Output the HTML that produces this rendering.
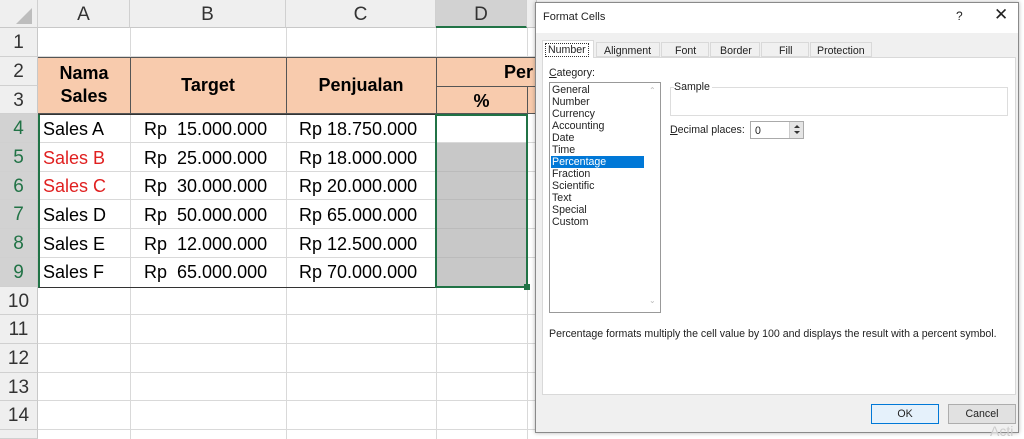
<!DOCTYPE html>
<html><head><meta charset="utf-8"><style>
*{margin:0;padding:0;box-sizing:border-box}
body{width:1024px;height:439px;overflow:hidden;background:#fff;position:relative;font-family:"Liberation Sans",Arial,sans-serif}
.a{position:absolute}
.hl{position:absolute;height:1px;background:#d9d9d9}
.vl{position:absolute;width:1px;background:#d9d9d9}
.ch{position:absolute;top:0;height:28px;font-size:19px;color:#333;text-align:center;line-height:30px;background:#efefef;border-right:1px solid #d0d0d0;border-bottom:1px solid #c8c8c8}
.rh{position:absolute;left:0;width:38px;font-size:19px;color:#333;text-align:center;background:#efefef;border-bottom:1px solid #d0d0d0;border-right:1px solid #c8c8c8}
.t{position:absolute;font-size:18px;color:#000;white-space:nowrap}
.d{font-family:"Liberation Sans",Tahoma,sans-serif;font-size:10.6px;color:#222;white-space:nowrap}
</style></head><body>
<div class="ch" style="left:0;width:38px"><div class="a" style="left:16px;top:8px;width:0;height:0;border-left:16px solid transparent;border-bottom:16px solid #bdbdbd"></div></div>
<div class="ch" style="left:38px;width:92px">A</div>
<div class="ch" style="left:130px;width:156px">B</div>
<div class="ch" style="left:286px;width:150px">C</div>
<div class="ch" style="left:436px;width:91px;background:#d2d2d2;border-bottom:2px solid #217346">D</div>
<div class="ch" style="left:527px;width:10px"></div>
<div class="rh" style="top:28px;height:29px;line-height:30px">1</div>
<div class="rh" style="top:57px;height:29px;line-height:30px">2</div>
<div class="rh" style="top:86px;height:28px;line-height:30px">3</div>
<div class="rh" style="top:114px;height:29px;line-height:30px;background:#d2d2d2;color:#217346">4</div>
<div class="rh" style="top:143px;height:29px;line-height:30px;background:#d2d2d2;color:#217346">5</div>
<div class="rh" style="top:172px;height:28px;line-height:30px;background:#d2d2d2;color:#217346">6</div>
<div class="rh" style="top:200px;height:29px;line-height:30px;background:#d2d2d2;color:#217346">7</div>
<div class="rh" style="top:229px;height:29px;line-height:30px;background:#d2d2d2;color:#217346">8</div>
<div class="rh" style="top:258px;height:29px;line-height:30px;background:#d2d2d2;color:#217346">9</div>
<div class="rh" style="top:287px;height:28px;line-height:30px">10</div>
<div class="rh" style="top:315px;height:29px;line-height:30px">11</div>
<div class="rh" style="top:344px;height:29px;line-height:30px">12</div>
<div class="rh" style="top:373px;height:28px;line-height:30px">13</div>
<div class="rh" style="top:401px;height:29px;line-height:30px">14</div>
<div class="rh" style="top:430px;height:9px"></div>
<div class="vl" style="left:130px;top:28px;height:411px"></div>
<div class="vl" style="left:286px;top:28px;height:411px"></div>
<div class="vl" style="left:436px;top:28px;height:411px"></div>
<div class="vl" style="left:527px;top:28px;height:411px"></div>
<div class="hl" style="left:38px;top:56px;width:500px"></div>
<div class="hl" style="left:38px;top:142px;width:500px"></div>
<div class="hl" style="left:38px;top:171px;width:500px"></div>
<div class="hl" style="left:38px;top:199px;width:500px"></div>
<div class="hl" style="left:38px;top:228px;width:500px"></div>
<div class="hl" style="left:38px;top:257px;width:500px"></div>
<div class="hl" style="left:38px;top:314px;width:500px"></div>
<div class="hl" style="left:38px;top:343px;width:500px"></div>
<div class="hl" style="left:38px;top:372px;width:500px"></div>
<div class="hl" style="left:38px;top:400px;width:500px"></div>
<div class="hl" style="left:38px;top:429px;width:500px"></div>
<div class="a" style="left:38px;top:57px;width:500px;height:57px;background:#f8cbad;border-top:1px solid #555;border-bottom:1px solid #555"></div>
<div class="a" style="left:130px;top:57px;width:1px;height:57px;background:#555"></div>
<div class="a" style="left:286px;top:57px;width:1px;height:57px;background:#555"></div>
<div class="a" style="left:436px;top:57px;width:1px;height:57px;background:#555"></div>
<div class="a" style="left:436px;top:86px;width:100px;height:1px;background:#555"></div>
<div class="a" style="left:527px;top:86px;width:1px;height:28px;background:#555"></div>
<div class="t" style="left:38px;top:62px;width:92px;text-align:center;font-weight:bold;line-height:23px">Nama<br>Sales</div>
<div class="t" style="left:130px;top:75px;width:156px;text-align:center;font-weight:bold">Target</div>
<div class="t" style="left:286px;top:75px;width:150px;text-align:center;font-weight:bold">Penjualan</div>
<div class="t" style="left:504px;top:62px;font-weight:bold">Per</div>
<div class="t" style="left:436px;top:91px;width:91px;text-align:center;font-weight:bold">%</div>
<div class="a" style="left:437px;top:143px;width:90px;height:144px;background:#c8c8c8"></div>
<div class="hl" style="left:437px;top:171px;width:90px;background:#bbb"></div>
<div class="hl" style="left:437px;top:199px;width:90px;background:#bbb"></div>
<div class="hl" style="left:437px;top:228px;width:90px;background:#bbb"></div>
<div class="hl" style="left:437px;top:257px;width:90px;background:#bbb"></div>
<div class="a" style="left:38px;top:114px;width:399px;height:174px;border:1px solid #333;border-left:2px solid #217346"></div>
<div class="a" style="left:435px;top:114px;width:93px;height:174px;border:2px solid #217346"></div>
<div class="a" style="left:524px;top:284px;width:6px;height:6px;background:#217346"></div>
<div class="t" style="left:43px;top:119px">Sales A</div>
<div class="t" style="left:43px;top:148px;color:#e02020">Sales B</div>
<div class="t" style="left:43px;top:176px;color:#e02020">Sales C</div>
<div class="t" style="left:43px;top:205px">Sales D</div>
<div class="t" style="left:43px;top:234px">Sales E</div>
<div class="t" style="left:43px;top:262px">Sales F</div>
<div class="t" style="left:144px;top:119px">Rp&nbsp; 15.000.000</div>
<div class="t" style="left:144px;top:148px">Rp&nbsp; 25.000.000</div>
<div class="t" style="left:144px;top:176px">Rp&nbsp; 30.000.000</div>
<div class="t" style="left:144px;top:205px">Rp&nbsp; 50.000.000</div>
<div class="t" style="left:144px;top:234px">Rp&nbsp; 12.000.000</div>
<div class="t" style="left:144px;top:262px">Rp&nbsp; 65.000.000</div>
<div class="t" style="left:299px;top:119px">Rp 18.750.000</div>
<div class="t" style="left:299px;top:148px">Rp 18.000.000</div>
<div class="t" style="left:299px;top:176px">Rp 20.000.000</div>
<div class="t" style="left:299px;top:205px">Rp 65.000.000</div>
<div class="t" style="left:299px;top:234px">Rp 12.500.000</div>
<div class="t" style="left:299px;top:262px">Rp 70.000.000</div>
<div class="a" style="left:535px;top:2px;width:484px;height:431px;background:#f0f0f0;border:1px solid #8a8a8a;box-shadow:0 0 4px rgba(0,0,0,.3)"></div>
<div class="a" style="left:536px;top:3px;width:482px;height:30px;background:#fff"></div>
<div class="a d" style="left:543px;top:11px;font-size:11px">Format Cells</div>
<div class="a d" style="left:956px;top:9px;font-size:12px">?</div>
<div class="a" style="left:994px;top:5px;font-size:17px;color:#222;font-family:'DejaVu Sans',sans-serif">✕</div>
<div class="a" style="left:542px;top:57px;width:474px;height:338px;background:#fff;border:1px solid #d9d9d9"></div>
<div class="a d" style="left:542px;top:40px;width:52px;height:18px;background:#fff;border:1px solid #d9d9d9;border-bottom:none"><span style="position:absolute;left:2px;top:2px;border:1px dotted #333;padding:0 2px">Number</span></div>
<div class="a d" style="left:596px;top:42px;width:64px;height:15px;border:1px solid #d9d9d9;padding:2px 0 0 7px">Alignment</div>
<div class="a d" style="left:661px;top:42px;width:48px;height:15px;border:1px solid #d9d9d9;padding:2px 0 0 13px">Font</div>
<div class="a d" style="left:710px;top:42px;width:50px;height:15px;border:1px solid #d9d9d9;padding:2px 0 0 9px">Border</div>
<div class="a d" style="left:761px;top:42px;width:48px;height:15px;border:1px solid #d9d9d9;padding:2px 0 0 17px">Fill</div>
<div class="a d" style="left:810px;top:42px;width:62px;height:15px;border:1px solid #d9d9d9;padding:2px 0 0 6px">Protection</div>
<div class="a d" style="left:549px;top:67px"><u>C</u>ategory:</div>
<div class="a" style="left:549px;top:82px;width:112px;height:231px;border:1px solid #999;background:#fff"></div>
<div class="a d" style="left:552px;top:84px;line-height:12px;width:92px">General<br>Number<br>Currency<br>Accounting<br>Date<br>Time<br><span style="display:block;background:#0078d7;color:#fff;margin-left:-1px;padding-left:1px">Percentage</span>Fraction<br>Scientific<br>Text<br>Special<br>Custom</div>
<div class="a" style="left:649px;top:86px;font-size:8px;color:#bbb">⌃</div>
<div class="a" style="left:649px;top:296px;font-size:8px;color:#bbb">⌄</div>
<div class="a" style="left:670px;top:87px;width:338px;height:29px;border:1px solid #ddd"></div>
<div class="a d" style="left:674px;top:81px;background:#fff;padding-right:2px">Sample</div>
<div class="a d" style="left:670px;top:124px"><u>D</u>ecimal places:</div>
<div class="a d" style="left:750px;top:121px;width:54px;height:18px;border:1px solid #aaa;background:#fff;padding:3px 0 0 4px">0</div>
<div class="a" style="left:789px;top:122px;width:14px;height:16px;background:#e5e5e5;border-left:1px solid #ccc"><div class="a" style="left:4px;top:3px;border-left:3px solid transparent;border-right:3px solid transparent;border-bottom:3px solid #333"></div><div class="a" style="left:4px;top:9px;border-left:3px solid transparent;border-right:3px solid transparent;border-top:3px solid #333"></div></div>
<div class="a d" style="left:549px;top:328px">Percentage formats multiply the cell value by 100 and displays the result with a percent symbol.</div>
<div class="a d" style="left:871px;top:404px;width:68px;height:20px;background:#e5f1fb;border:1px solid #0078d7;text-align:center;line-height:18px">OK</div>
<div class="a d" style="left:948px;top:404px;width:68px;height:20px;background:#e1e1e1;border:1px solid #adadad;text-align:center;line-height:18px">Cancel</div>
<div class="a" style="left:990px;top:423px;font-size:14px;color:#ccc">Acti</div>
</body></html>
